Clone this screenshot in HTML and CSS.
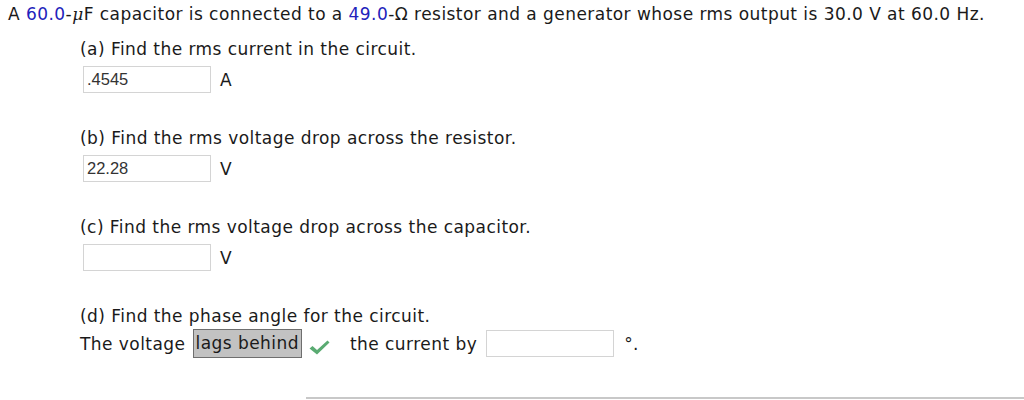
FILE: index.html
```html
<!DOCTYPE html>
<html>
<head>
<meta charset="utf-8">
<link rel="stylesheet" href="styles.css">
</head>
<body>
<p class="intro">A <span class="num">60.0</span>-<i class="mu">μ</i>F capacitor is connected to a <span class="num">49.0</span>-Ω resistor and a generator whose rms output is 30.0 V at 60.0 Hz.</p>
<div class="parts">
  <div class="part">
    <p class="q">(a) Find the rms current in the circuit.</p>
    <div class="answer"><span class="box">.4545</span><span class="unit">A</span></div>
  </div>
  <div class="part">
    <p class="q">(b) Find the rms voltage drop across the resistor.</p>
    <div class="answer"><span class="box">22.28</span><span class="unit">V</span></div>
  </div>
  <div class="part">
    <p class="q">(c) Find the rms voltage drop across the capacitor.</p>
    <div class="answer"><span class="box"></span><span class="unit">V</span></div>
  </div>
  <div class="part">
    <p class="q">(d) Find the phase angle for the circuit.</p>
    <div class="answer phase">
      <span>The voltage</span>
      <span class="select">lags behind</span>
      <svg class="check" width="21" height="15" viewBox="0 0 21 15"><path d="M0.5 8.5 L3.5 6 L8 10 L18.5 0.5 L20.5 2.5 L8 14.5 Z" fill="#5aab72"/></svg>
      <span class="current">the current by</span>
      <span class="box"></span>
      <span class="deg">°.</span>
    </div>
  </div>
</div>
<div class="rule"></div>
</body>
</html>
```
FILE: styles.css
```css
html, body { margin: 0; padding: 0; background: #fff; }
body {
  font-family: "DejaVu Sans", Verdana, sans-serif;
  font-size: 17px;
  letter-spacing: 0.45px;
  color: #1a1a1a;
  width: 1024px;
  height: 400px;
  overflow: hidden;
  position: relative;
}
p { margin: 0; }
.intro { padding: 4px 0 0 8px; line-height: 20px; white-space: nowrap; }
.num { color: #2222bb; }
.mu { font-family: "DejaVu Serif", serif; }
.parts { padding-left: 80px; }
.part { height: 89px; }
.part:first-child { margin-top: 15px; }
.q { line-height: 20px; }
.answer { display: flex; align-items: center; margin-top: 7px; margin-left: 3px; }
.box {
  box-sizing: border-box;
  width: 128px; height: 27px;
  border: 1px solid #d4d4d4;
  font-family: "Liberation Sans", Arial, sans-serif;
  font-size: 16.5px;
  letter-spacing: 0;
  color: #333;
  padding: 3px 0 0 3px;
}
.unit { margin-left: 9px; }
.phase { margin-left: 0; margin-top: 3px; }
.select {
  margin-left: 7px;
  box-sizing: border-box;
  height: 29px;
  padding: 1px 2px 0 2px;
  background: #c2c2c2;
  border: 1px solid #6e6e6e;
  line-height: 24px;
}
.check { margin-left: 7px; margin-top: 8px; }
.current { margin-left: 20px; }
.phase .box { margin-left: 9px; }
.deg { margin-left: 10px; }
.rule { position: absolute; left: 306px; right: 0; top: 397px; height: 2px; background: #c8c8c8; }
```
